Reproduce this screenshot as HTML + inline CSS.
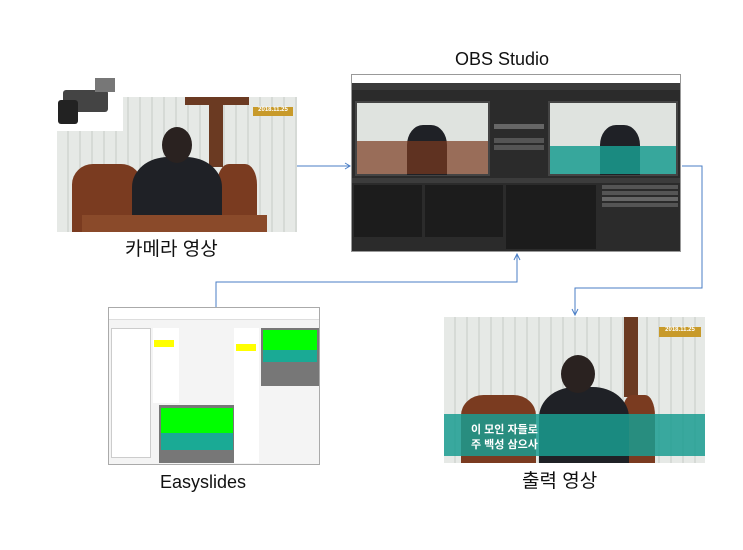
<!DOCTYPE html>
<html><head><meta charset="utf-8"><style>
*{margin:0;padding:0;box-sizing:border-box}
body{width:743px;height:550px;background:#fff;position:relative;overflow:hidden;font-family:"Liberation Sans","Noto Sans CJK KR",sans-serif}
.a{position:absolute}
.photo{position:absolute;overflow:hidden;background:#dfe3df}
.photo .wall{position:absolute;inset:0;background:repeating-linear-gradient(90deg,#e6e9e6 0 10px,#d6dad6 10px 12px)}
.photo .cross{position:absolute;background:#6b3a22}
.photo .wood{position:absolute;background:#7a3b20;border-radius:30% 30% 0 0}
.photo .pod{position:absolute;background:#8a4a2a}
.photo .man{position:absolute;background:#1f2126;border-radius:40% 40% 0 0}
.photo .head{position:absolute;background:#2a2220;border-radius:50%}
.photo .date{position:absolute;background:#c89a2a;color:#fff;font-size:6px;font-weight:bold;text-align:center}
.lbl{position:absolute;font-size:19px;color:#111;white-space:nowrap}
</style></head><body>

<div class="photo" style="left:57px;top:97px;width:240px;height:135px">
 <div class="wall"></div>
 <div class="cross" style="left:152px;top:0;width:14px;height:70px"></div>
 <div class="cross" style="left:128px;top:0;width:64px;height:8px"></div>
 <div class="wood" style="left:15px;top:67px;width:70px;height:68px"></div>
 <div class="wood" style="left:160px;top:67px;width:40px;height:68px"></div>
 <div class="man" style="left:75px;top:60px;width:90px;height:75px"></div>
 <div class="head" style="left:105px;top:30px;width:30px;height:36px"></div>
 <div class="pod" style="left:25px;top:118px;width:185px;height:17px"></div>
 <div class="date" style="left:196px;top:10px;width:40px;height:9px">2018.11.25</div>
</div>
<div class="a" style="left:57px;top:73px;width:66px;height:58px;background:#fff"></div>
<div class="a" style="left:63px;top:90px;width:45px;height:22px;background:#444;border-radius:3px"></div>
<div class="a" style="left:58px;top:100px;width:20px;height:24px;background:#222;border-radius:3px"></div>
<div class="a" style="left:95px;top:78px;width:20px;height:14px;background:#777"></div>
<div class="lbl" style="left:125px;top:234px">카메라 영상</div>

<div class="lbl" style="left:455px;top:49px;font-size:18px">OBS Studio</div>
<div class="a" style="left:351px;top:74px;width:330px;height:178px;background:#2b2b2b;border:1px solid #999">
 <div class="a" style="left:0;top:0;width:328px;height:8px;background:#fff"></div>
 <div class="a" style="left:0;top:8px;width:328px;height:7px;background:#3a3a3a"></div>
 <div class="a" style="left:3px;top:26px;width:135px;height:75px;background:#dfe3df;border:2px solid #444">
  <div class="a" style="left:50px;top:22px;width:40px;height:50px;background:#1f2126;border-radius:40% 40% 0 0"></div>
  <div class="a" style="left:0;top:38px;width:131px;height:33px;background:#7a3b20;opacity:.7"></div>
 </div>
 <div class="a" style="left:196px;top:26px;width:130px;height:75px;background:#dfe3df;border:2px solid #444">
  <div class="a" style="left:50px;top:22px;width:40px;height:50px;background:#1f2126;border-radius:40% 40% 0 0"></div>
  <div class="a" style="left:0;top:43px;width:126px;height:28px;background:#1a9c90;opacity:.85"></div>
 </div>
 <div class="a" style="left:142px;top:49px;width:50px;height:5px;background:#666"></div>
 <div class="a" style="left:142px;top:63px;width:50px;height:5px;background:#555"></div>
 <div class="a" style="left:142px;top:70px;width:50px;height:5px;background:#555"></div>
 <div class="a" style="left:0;top:103px;width:328px;height:5px;background:#3c3c3c"></div>
 <div class="a" style="left:2px;top:110px;width:68px;height:52px;background:#1c1c1c"></div>
 <div class="a" style="left:73px;top:110px;width:78px;height:52px;background:#1c1c1c"></div>
 <div class="a" style="left:154px;top:110px;width:90px;height:64px;background:#1c1c1c"></div>
 <div class="a" style="left:250px;top:110px;width:76px;height:4px;background:#555"></div>
 <div class="a" style="left:250px;top:116px;width:76px;height:4px;background:#555"></div>
 <div class="a" style="left:250px;top:122px;width:76px;height:4px;background:#666"></div>
 <div class="a" style="left:250px;top:128px;width:76px;height:4px;background:#555"></div>
</div>

<div class="a" style="left:108px;top:307px;width:212px;height:158px;background:#f4f4f4;border:1px solid #aaa">
 <div class="a" style="left:0;top:0;width:210px;height:12px;background:#fff;border-bottom:1px solid #ddd"></div>
 <div class="a" style="left:2px;top:20px;width:40px;height:130px;background:#fff;border:1px solid #ccc"></div>
 <div class="a" style="left:44px;top:20px;width:26px;height:75px;background:#fff"></div>
 <div class="a" style="left:45px;top:32px;width:20px;height:7px;background:#ff0"></div>
 <div class="a" style="left:50px;top:97px;width:76px;height:58px;background:#777"></div>
 <div class="a" style="left:52px;top:100px;width:72px;height:25px;background:#0f0"></div>
 <div class="a" style="left:52px;top:125px;width:72px;height:17px;background:#1aaa95"></div>
 <div class="a" style="left:125px;top:20px;width:25px;height:135px;background:#fff"></div>
 <div class="a" style="left:127px;top:36px;width:20px;height:7px;background:#ff0"></div>
 <div class="a" style="left:152px;top:20px;width:58px;height:58px;background:#777"></div>
 <div class="a" style="left:154px;top:22px;width:54px;height:20px;background:#0f0"></div>
 <div class="a" style="left:154px;top:42px;width:54px;height:12px;background:#1aaa95"></div>
</div>
<div class="lbl" style="left:160px;top:472px;font-size:18px">Easyslides</div>

<div class="photo" style="left:444px;top:317px;width:261px;height:146px">
 <div class="wall"></div>
 <div class="cross" style="left:180px;top:0;width:14px;height:80px"></div>
 <div class="wood" style="left:17px;top:78px;width:75px;height:68px"></div>
 <div class="wood" style="left:178px;top:78px;width:33px;height:68px"></div>
 <div class="man" style="left:95px;top:70px;width:90px;height:76px"></div>
 <div class="head" style="left:117px;top:38px;width:34px;height:38px"></div>
 <div class="a" style="left:0;top:97px;width:261px;height:42px;background:#1a9c90;opacity:.85"></div>
 <div class="a" style="left:27px;top:106px;color:#fff;font-size:11px;line-height:15px;font-weight:bold">이 모인 자들로<br>주 백성 삼으사</div>
 <div class="date" style="left:215px;top:10px;width:42px;height:10px">2018.11.25</div>
</div>
<div class="lbl" style="left:522px;top:466px">출력 영상</div>

<svg class="a" style="left:0;top:0" width="743" height="550">
 <g stroke="#4a7ec6" stroke-width="1" fill="none">
  <path d="M297 166H350M345 163l5 3-5 3"/>
  <path d="M682 166H702V288H575V315M572 309l3 6 3-6"/>
  <path d="M216 307V282H517V254M514 260l3-6 3 6"/>
 </g>
</svg>
</body></html>
